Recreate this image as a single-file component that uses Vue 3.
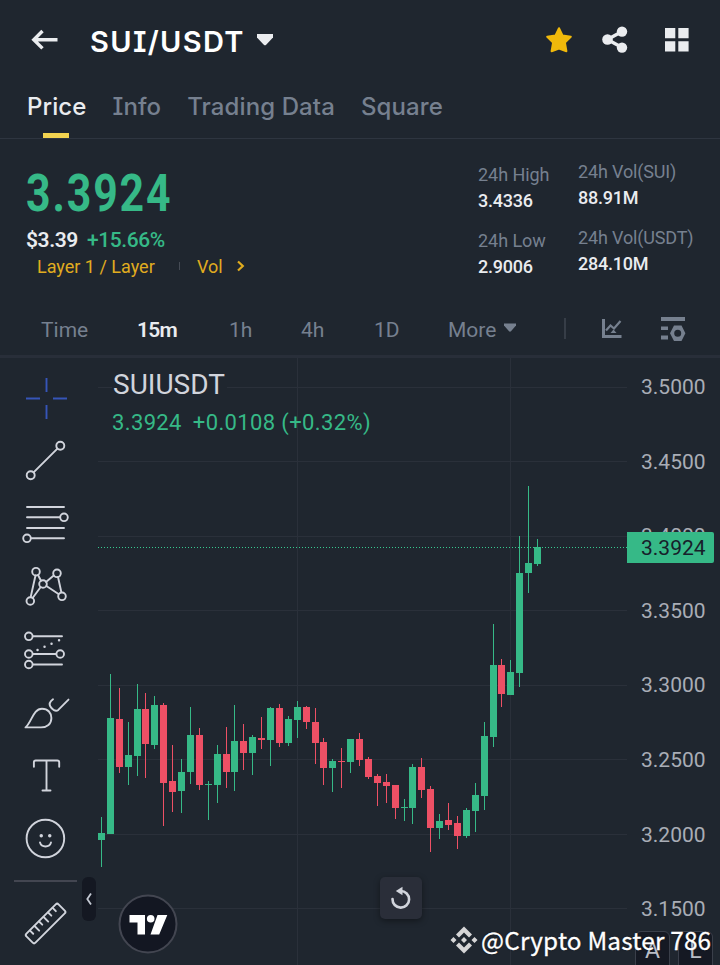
<script setup>
import { ref } from 'vue';

const tabs = ['Price', 'Info', 'Trading Data', 'Square'];
const activeTab = ref('Price');
const intervals = ['Time', '15m', '1h', '4h', '1D'];
const activeInterval = ref('15m');
const prices = ['3.5000', '3.4500', '3.4000', '3.3500', '3.3000', '3.2500', '3.2000', '3.1500'];
const gridRows = [387, 461, 536, 610, 685, 759, 834, 908];
const gridCols = [297, 510];

// [up, high, body top, body bottom, low]
const candles = [
  [1, 817, 833, 840, 867],
  [1, 674, 718, 834, 834],
  [0, 688, 719, 767, 773],
  [1, 722, 755, 767, 785],
  [1, 684, 709, 756, 776],
  [0, 693, 709, 744, 778],
  [1, 696, 705, 745, 749],
  [0, 703, 705, 783, 826],
  [0, 745, 781, 792, 812],
  [1, 759, 772, 791, 813],
  [1, 707, 735, 772, 784],
  [0, 728, 735, 785, 790],
  [1, 781, 784, 785, 820],
  [1, 745, 754, 785, 803],
  [0, 727, 754, 772, 788],
  [1, 705, 741, 772, 791],
  [0, 724, 741, 753, 770],
  [1, 735, 737, 753, 775],
  [0, 717, 738, 740, 749],
  [1, 707, 708, 740, 766],
  [0, 704, 708, 743, 747],
  [1, 716, 719, 743, 746],
  [1, 701, 707, 720, 738],
  [0, 706, 707, 722, 729],
  [0, 708, 722, 743, 764],
  [0, 738, 742, 768, 785],
  [1, 759, 761, 768, 792],
  [0, 748, 761, 762, 788],
  [1, 739, 739, 762, 773],
  [0, 733, 739, 760, 766],
  [0, 757, 759, 777, 779],
  [0, 774, 776, 783, 806],
  [0, 774, 782, 786, 803],
  [0, 785, 785, 808, 819],
  [1, 799, 807, 808, 821],
  [1, 764, 767, 808, 824],
  [0, 758, 767, 790, 798],
  [0, 786, 789, 828, 852],
  [1, 814, 821, 828, 839],
  [0, 803, 820, 825, 830],
  [0, 816, 823, 836, 849],
  [1, 808, 810, 836, 838],
  [1, 783, 795, 811, 832],
  [1, 722, 736, 796, 810],
  [1, 624, 665, 737, 747],
  [0, 659, 665, 694, 707],
  [1, 660, 672, 695, 695],
  [1, 536, 573, 673, 687],
  [1, 486, 563, 573, 593],
  [1, 539, 547, 564, 566],
];
function candleX(i) {
  return Math.round(98 + i * 8.898);
}
</script>
<template>
  <div class="screen">
    <header class="header">
      <svg class="back" width="28" height="22" viewBox="0 0 28 22">
        <path d="M11.500 2 L2.800 10.700 L11.500 19.400 M3 10.700 H26.500" fill="none" stroke="#eaecef" stroke-width="3.400" />
      </svg>
      <h1>SUI/USDT</h1>
      <svg class="caret" width="18" height="14" viewBox="0 0 18 14">
        <path d="M1 1 H17 V4.500 L10.200 11.800 Q9 12.900 7.800 11.800 L1 4.500 Z" fill="#eaecef" />
      </svg>
      <div class="actions">
        <svg width="28" height="28" viewBox="0 0 28 28">
          <path d="M14 2.200 L17.600 9.600 L25.800 10.700 L19.900 16.500 L21.400 25.200 L14 22.600 L6.600 25.200 L8.100 16.500 L2.200 10.700 L10.400 9.600 Z" fill="#f0b90b" stroke="#f0b90b" stroke-width="2" stroke-linejoin="round" />
        </svg>
        <svg class="share" width="28" height="28" viewBox="0 0 28 28">
          <path d="M21 5.500 L6.500 13.500 L21 21.500" fill="none" stroke="#eaecef" stroke-width="3.400" />
          <circle cx="21" cy="5.600" r="5.200" fill="#eaecef" />
          <circle cx="6.500" cy="13.500" r="5.300" fill="#eaecef" />
          <circle cx="21" cy="21.600" r="5.200" fill="#eaecef" />
        </svg>
        <svg class="apps" width="26" height="26" viewBox="0 0 26 26">
          <path d="M1 1 h10.300 v10.300 h-10.300z M14.300 1 h10.300 v10.300 h-10.300z M1 14.300 h10.300 v10.300 h-10.300z M14.300 14.300 h10.300 v10.300 h-10.300z" fill="#eaecef" />
        </svg>
      </div>
    </header>

    <nav class="tabs">
      <a v-for="t in tabs" :key="t" :class="{ active: t === activeTab }" @click="activeTab = t">{{ t }}</a>
    </nav>

    <section class="summary">
      <div class="quote">
        <div class="last"><span>3.3924</span></div>
        <div class="change"><b>$3.39</b><span>+15.66%</span></div>
        <div class="tags">
          <span class="layer">Layer 1 / Layer</span>
          <i></i>
          <span class="vol">Vol</span>
          <svg width="10" height="12" viewBox="0 0 10 12">
            <path d="M2 1.500 L6.800 6 L2 10.500" fill="none" stroke="#e0ac1f" stroke-width="2.200" />
          </svg>
        </div>
      </div>
      <dl class="stats high-low">
        <dt>24h High</dt><dd>3.4336</dd>
        <dt>24h Low</dt><dd>2.9006</dd>
      </dl>
      <dl class="stats volume">
        <dt>24h Vol(SUI)</dt><dd>88.91M</dd>
        <dt>24h Vol(USDT)</dt><dd>284.10M</dd>
      </dl>
    </section>

    <div class="intervals">
      <a v-for="(t, i) in intervals" :key="t" :class="['step' + i, { active: t === activeInterval }]" @click="activeInterval = t">{{ t }}</a>
      <a class="more">More</a>
      <svg class="more-caret" width="14" height="10" viewBox="0 0 14 10">
        <path d="M1 .5 H13 V2.500 L8 8.300 Q7 9.200 6 8.300 L1 2.500 Z" fill="#76808f" />
      </svg>
      <i class="bar"></i>
      <svg class="indicator" width="20" height="20" viewBox="0 0 20 20">
        <path d="M1.500 0 V17.500 H19.500" fill="none" stroke="#76808f" stroke-width="3" />
        <path d="M4 11.500 L8.500 6.500 L12 9.500 L18.500 2" fill="none" stroke="#76808f" stroke-width="2.200" />
        <path d="M8.500 14 L11.500 10.500 L14.500 14 Z" fill="#76808f" />
      </svg>
      <svg class="settings" width="26" height="26" viewBox="0 0 26 26">
        <path d="M1 1 H25 V5 H1 Z M1 10.500 H8 V14 H1 Z M1 19.500 H8 V23.500 H1 Z" fill="#76808f" />
        <path d="M14 9.500 H21.500 L25.400 17.200 L21.500 25 H14 L10 17.200 Z M17.700 13.700 A3.500 3.500 0 1 0 17.700 20.700 A3.500 3.500 0 1 0 17.700 13.700" fill="#76808f" fill-rule="evenodd" />
      </svg>
    </div>

    <main class="chart">
      <aside class="tools">
        <svg class="cross" viewBox="0 0 98 63">
          <path d="M46.500 11 V25 M46.500 38 V52 M26 31.500 H40 M53 31.500 H67" />
        </svg>
        <svg viewBox="0 0 98 63">
          <path d="M33.600 42.400 L57.400 18.600" />
          <circle cx="60.300" cy="15.700" r="4" /><circle cx="30.700" cy="45.300" r="4" />
        </svg>
        <svg viewBox="0 0 98 63">
          <path d="M27 14 H64 M27 24.300 H60 M27 35 H64 M31 45.300 H64" />
          <circle cx="64" cy="24.300" r="3.800" /><circle cx="27" cy="45.300" r="3.800" />
        </svg>
        <svg viewBox="0 0 98 63">
          <path d="M30.700 41 L35.500 19.500 M38 19 L41 24.700 M46 26 L53.700 19.500 M58 21 L61.300 36 M46.400 30 L58.500 38 M40.700 31 L32.800 41.800" />
          <circle cx="36" cy="15.700" r="3.800" /><circle cx="57" cy="17.300" r="3.800" />
          <circle cx="43" cy="28" r="3.800" /><circle cx="30.300" cy="45" r="3.800" /><circle cx="62" cy="40.300" r="3.800" />
        </svg>
        <svg viewBox="0 0 98 63">
          <path d="M33 17.300 H62 M33 35 H56 M33 45.500 H62" />
          <circle cx="28.800" cy="17.300" r="3.800" /><circle cx="28.800" cy="35" r="3.800" />
          <circle cx="60.200" cy="35" r="3.800" /><circle cx="28.800" cy="45.500" r="3.800" />
          <path d="M37.500 31 h.1 M44.500 27.800 h.1 M51.500 24.800 h.1 M59 21.300 h.1" stroke-width="2.400" />
        </svg>
        <svg viewBox="0 0 98 63">
          <path d="M25.500 45.400 C32 40 33 26.700 42 26.700 C48 26.700 51.400 31 51.400 36 C51.400 42 47 45.400 41 45.400 Z" />
          <path d="M53 17.300 C50 19.500 49 22 50.200 24.300 C51 25.900 52.600 27.300 54 28.200 C55.500 29 57 29 58.300 27.900 L68.500 17.600" />
        </svg>
        <svg viewBox="0 0 98 63">
          <path d="M33.900 21.700 V17.300 Q33.900 15.500 35.700 15.500 H57.300 Q59.200 15.500 59.200 17.300 V21.700 M46.500 15.500 V45.500 M42.500 45.500 H50.500" />
        </svg>
        <svg viewBox="0 0 98 63">
          <circle cx="45.400" cy="30.500" r="18.800" />
          <path d="M40 34.500 C41.500 39.800 49.500 39.800 51 34.500" />
          <path d="M41.200 27.800 h.1 M49.700 27.800 h.1" stroke-width="3.400" />
        </svg>
        <hr />
        <svg class="ruler" viewBox="0 0 98 74">
          <g transform="translate(45.600 31.500) rotate(-45)">
            <rect x="-22.700" y="-6.400" width="45.400" height="12.800" rx="2" />
            <path d="M-16 -6 V-1.500 M-9.600 -6 V0.500 M-3.200 -6 V-1.500 M3.200 -6 V0.500 M9.600 -6 V-1.500 M16 -6 V-1.500" />
          </g>
        </svg>
        <button class="collapse">
          <svg width="8" height="14" viewBox="0 0 8 14"><path d="M6 1.500 L2.300 7 L6 12.500" fill="none" stroke="#c3c8d2" stroke-width="1.800" /></svg>
        </button>
      </aside>

      <div class="plot">
        <svg class="candles" width="529" height="607" viewBox="98 358 529 607" shape-rendering="crispEdges">
          <rect v-for="y in gridRows" :key="y" x="98" :y="y" width="529" height="1" fill="#2a303a" />
          <rect v-for="x in gridCols" :key="x" :x="x" y="358" width="1" height="607" fill="#2a303a" />
          <g v-for="(c, i) in candles" :key="i" :fill="c[0] ? '#36b987' : '#ed5065'">
            <rect :x="candleX(i) + 3" :y="c[1]" width="1" :height="c[4] - c[1]" />
            <rect :x="candleX(i)" :y="c[2]" width="7" :height="c[3] - c[2]" />
          </g>
          <path d="M98 547.500 H627" stroke="#36c98f" stroke-width="1" stroke-dasharray="1 2" />
        </svg>
        <div class="legend">
          <div class="symbol">SUIUSDT</div>
          <div class="values"><span>3.3924</span><span>+0.0108 (+0.32%)</span></div>
        </div>
        <svg class="tv-logo" width="60" height="60" viewBox="0 0 60 60">
          <circle cx="30" cy="30" r="28.500" fill="#131722" stroke="#434651" stroke-width="2" />
          <path d="M11.500 21 H27 V40.500 H19.500 V28.500 H11.500 Z M39.500 21 H49.300 L41.200 40.500 H32.500 Z" fill="#fff" />
          <circle cx="32.700" cy="24.700" r="3.800" fill="#fff" />
        </svg>
        <button class="reset">
          <svg width="22" height="24" viewBox="0 0 22 24">
            <path d="M2.500 13 A8.300 8.300 0 1 0 10.800 5" fill="none" stroke="#d1d4dc" stroke-width="2.600" stroke-linecap="round" />
            <path d="M5.800 5 L12.500 .8 V9.300 Z" fill="#d1d4dc" />
          </svg>
        </button>
      </div>

      <div class="axis">
        <div class="price" v-for="p in prices" :key="p">{{ p }}</div>
        <div class="current">3.3924</div>
        <div class="modes"><span>A</span><span>L</span></div>
      </div>
    </main>

    <div class="watermark">
      <svg width="28" height="28" viewBox="0 0 28 28">
        <path d="M14 .5 L22 8.500 L19 11.500 L14 6.500 L9 11.500 L6 8.500 Z M14 27.500 L22 19.500 L19 16.500 L14 21.500 L9 16.500 L6 19.500 Z M3.500 11 L6.500 14 L3.500 17 L.5 14 Z M24.500 11 L27.500 14 L24.500 17 L21.500 14 Z M14 11 L17 14 L14 17 L11 14 Z" fill="#d6d6d7" />
      </svg>
      <span>@Crypto Master 786</span>
    </div>
  </div>
</template>
<style>
  body {
    background: #1f2630;
  }
</style>
<style scoped>
  .screen {
    position: relative;
    width: 720px;
    height: 965px;
    overflow: hidden;
    background: #1f262f;
    color: #eaecef;
    font-family: Roboto, "Liberation Sans", sans-serif;
  }
  .screen * {
    box-sizing: border-box;
  }
  svg {
    display: block;
    flex: none;
  }
  button {
    border: 0;
    padding: 0;
    display: flex;
    align-items: center;
    justify-content: center;
  }
  .header {
    display: flex;
    align-items: center;
    height: 80px;
    padding: 0 30px 0 31px;
  }
  .header h1 {
    width: 166px;
    margin: 3px 0 0 31px;
    font: 600 29px/40px Inter, sans-serif;
    font-feature-settings: "cv08";
    letter-spacing: 1.350px;
    color: #fff;
    white-space: nowrap;
  }
  .actions {
    display: flex;
    align-items: center;
    margin-left: auto;
  }
  .share {
    margin-left: 28px;
  }
  .apps {
    margin-left: 35px;
  }
  .tabs {
    display: flex;
    gap: 26px;
    height: 59px;
    padding-left: 27px;
    border-bottom: 1px solid #2e3540;
    font: 500 24px/53px Inter, sans-serif;
    font-feature-settings: "cv08";
    letter-spacing: .1px;
    color: #76808f;
  }
  .tabs a {
    display: flex;
    flex-direction: column;
    align-items: center;
    height: 58px;
    white-space: nowrap;
  }
  .tabs .active {
    color: #eaecef;
  }
  .tabs .active::after {
    content: "";
    width: 26px;
    height: 5px;
    margin-right: 1px;
    background: #f3d350;
  }
  .summary {
    display: flex;
    height: 165px;
  }
  .quote {
    width: 478px;
    padding: 28px 0 0 26px;
  }
  .last {
    height: 60px;
    font-size: 51px;
    line-height: 53px;
    font-weight: 700;
    color: #36b987;
  }
  .last span {
    display: inline-block;
    letter-spacing: 2.200px;
    transform: scaleX(.84);
    transform-origin: left;
  }
  .change {
    display: flex;
    gap: 9px;
    font-size: 21px;
    line-height: 26px;
    height: 26px;
  }
  .change b {
    font-weight: 600;
    letter-spacing: -.4px;
  }
  .change span {
    font-weight: 500;
    letter-spacing: -.4px;
    color: #36b987;
  }
  .tags {
    display: flex;
    align-items: center;
    height: 26px;
    padding-left: 11px;
    font-size: 18px;
    color: #e0ac1f;
  }
  .tags .layer {
    width: 142px;
  }
  .tags i {
    width: 1px;
    height: 8px;
    background: #454b55;
  }
  .tags .vol {
    margin: 0 13px 0 17px;
  }
  .stats {
    width: 100px;
    margin: 23px 0 0;
    white-space: nowrap;
    font-size: 18px;
    letter-spacing: -.05px;
  }
  .stats.volume {
    width: 142px;
    margin-top: 20px;
    letter-spacing: -.15px;
  }
  .stats dt {
    line-height: 26px;
    color: #76808f;
  }
  .stats dd {
    margin: 0 0 14px;
    line-height: 26px;
    font-weight: 500;
    letter-spacing: -.25px;
  }
  .intervals {
    display: flex;
    align-items: center;
    height: 54px;
    padding: 0 0 0 41px;
    border-bottom: 3px solid #282e39;
    font-size: 21px;
    color: #76808f;
  }
  .intervals .active {
    color: #eaecef;
    font-weight: 600;
    letter-spacing: -.7px;
  }
  .step0 {
    width: 96px;
  }
  .step1 {
    width: 92px;
  }
  .step2 {
    width: 72px;
  }
  .step3 {
    width: 73px;
  }
  .step4 {
    width: 74px;
  }
  .more {
    width: 55px;
  }
  .more-caret {
    margin-bottom: 3px;
  }
  .bar {
    width: 2px;
    height: 21px;
    margin: 0 36px 2px 47px;
    background: #363d47;
  }
  .indicator {
    margin-bottom: 2px;
  }
  .settings {
    margin: 0 0 1px 38px;
  }
  .chart {
    display: grid;
    grid-template-columns: 98px 529px 93px;
    height: 607px;
  }
  .tools {
    position: relative;
    padding-top: 9px;
  }
  .tools > svg {
    width: 98px;
    height: 63px;
    fill: none;
    stroke: #d1d4dc;
    stroke-width: 1.9;
    stroke-linecap: round;
    stroke-linejoin: round;
  }
  .tools > .cross {
    stroke: #3655b8;
    stroke-linecap: butt;
  }
  .tools > .ruler {
    height: 74px;
  }
  .tools hr {
    width: 63px;
    height: 2px;
    margin: 9px 0 10px 14px;
    border: 0;
    background: #434651;
  }
  .collapse {
    position: absolute;
    left: 82px;
    top: 519px;
    width: 14px;
    height: 44px;
    border-radius: 6px;
    background: #141822;
  }
  .plot {
    position: relative;
  }
  .legend {
    position: absolute;
    left: 14px;
    top: 10px;
    white-space: nowrap;
  }
  .symbol {
    width: 115px;
    padding-left: 1px;
    background: #1f262f;
    font-size: 28px;
    line-height: 34px;
    color: #d1d4dc;
  }
  .values {
    display: flex;
    gap: 11px;
    margin-top: 6px;
    font-size: 22px;
    line-height: 30px;
    letter-spacing: .37px;
    color: #36b987;
  }
  .tv-logo {
    position: absolute;
    left: 20px;
    top: 536px;
  }
  .reset {
    position: absolute;
    left: 282px;
    top: 519px;
    width: 42px;
    height: 42px;
    border-radius: 5px;
    background: #2a2e39;
    box-shadow: 0 2px 6px rgba(0, 0, 0, 0.4);
  }
  .axis {
    position: relative;
    overflow: hidden;
    height: 607px;
  }
  .price {
    height: 74.600px;
    padding-left: 14px;
    font-size: 21px;
    line-height: 74.600px;
    color: #a9adb6;
  }
  .price:first-child {
    margin-top: -8px;
  }
  .current {
    position: absolute;
    left: 0;
    top: 174px;
    width: 87px;
    height: 31px;
    padding-left: 14px;
    border-radius: 0 2px 2px 0;
    background: #36b987;
    font-size: 21px;
    line-height: 32px;
    color: #17202a;
  }
  .modes {
    position: absolute;
    left: 8px;
    top: 573px;
    display: flex;
    gap: 8px;
  }
  .modes span {
    width: 35px;
    height: 42px;
    border: 1px solid #3a3f4a;
    border-radius: 6px;
    background: #151923;
    text-align: center;
    font-size: 23px;
    line-height: 38px;
    color: #b9bdc6;
  }
  .watermark {
    position: absolute;
    left: 450px;
    top: 922px;
    display: flex;
    align-items: center;
    gap: 3px;
    font: 400 24.300px/36px "Noto Sans CJK SC", sans-serif;
    letter-spacing: .2px;
    color: #fff;
    white-space: nowrap;
    -webkit-text-stroke: .3px #fff;
    text-shadow: 0 0 2px rgba(0, 0, 0, 0.5);
  }
</style>
